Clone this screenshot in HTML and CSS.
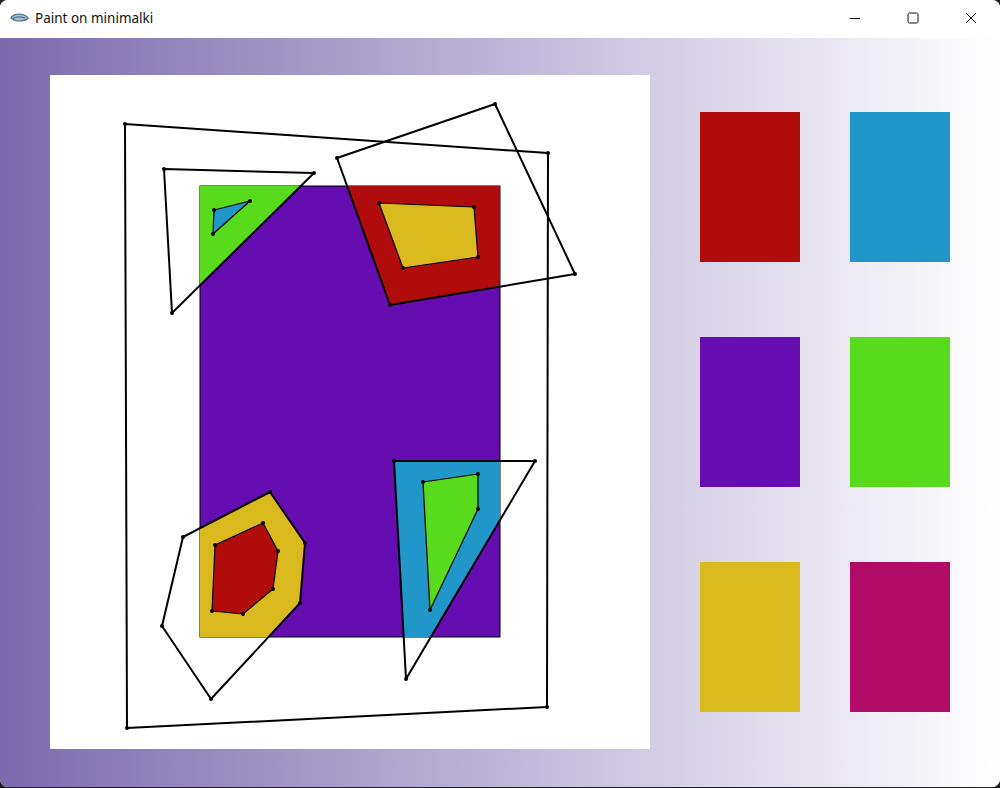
FILE: index.html
```html
<!DOCTYPE html>
<html>
<head>
<meta charset="utf-8">
<title>Paint on minimalki</title>
<link rel="stylesheet" href="styles.css">
</head>
<body>
<div class="window">
  <div class="titlebar">
    <div class="title">
      <svg class="app-icon" width="19" height="12" viewBox="0 0 19 12">
        <path d="M1 6 C3 2 9 1 14 3 C16 4 18 5 18 6.5 C16 8 12 9 8 9 C5 9 3 8 1 6 Z" fill="#a9c3d2" stroke="#3f6b86" stroke-width="1.2"/>
        <path d="M3 6.5 C6 4.5 10 4.5 15 6" fill="none" stroke="#2f5a74" stroke-width="1"/>
      </svg>
      <span class="title-text">Paint on minimalki</span>
    </div>
    <div class="controls">
      <div class="ctrl">
        <svg width="12" height="12" viewBox="0 0 12 12"><path d="M1 6.5 H11" stroke="#111" stroke-width="1"/></svg>
      </div>
      <div class="ctrl">
        <svg width="12" height="12" viewBox="0 0 12 12"><rect x="1" y="1" width="10" height="10" rx="1.5" fill="none" stroke="#111" stroke-width="1"/></svg>
      </div>
      <div class="ctrl">
        <svg width="12" height="12" viewBox="0 0 12 12"><path d="M1 1 L11 11 M11 1 L1 11" stroke="#111" stroke-width="1"/></svg>
      </div>
    </div>
  </div>
  <div class="client">
    <div class="canvas">
      <svg width="600" height="674" viewBox="50 75 600 674">
        <defs>
          <clipPath id="rect">
            <rect x="200" y="186" width="300" height="451"/>
          </clipPath>
        </defs>
        <rect x="200" y="186" width="300" height="451" fill="#650db0" stroke="#000" stroke-width="1"/>
        <g clip-path="url(#rect)">
          <polygon points="164,169 314,173 172,313" fill="#58da1d"/>
          <polygon points="337,158 495,104 575,274 390,305" fill="#b00c0c"/>
          <polygon points="183,537 270,492 305,543 300,603 211,699 162,626" fill="#dab91f"/>
          <polygon points="394,461 535,461 406,679" fill="#2196c8"/>
        </g>
        <polygon points="214,210 250,201 213,234" fill="#2196c8"/>
        <polygon points="379,203 474,207 478,257 403,268" fill="#dab91f"/>
        <polygon points="215,545 263,523 278,551 273,589 243,614 212,611" fill="#b00c0c"/>
        <polygon points="423,482 478,474 478,509 430,610" fill="#58da1d"/>
        <g fill="none" stroke="#000" stroke-width="1.2" stroke-linejoin="round">
          <polygon points="214,210 250,201 213,234"/>
          <polygon points="379,203 474,207 478,257 403,268"/>
          <polygon points="215,545 263,523 278,551 273,589 243,614 212,611"/>
          <polygon points="423,482 478,474 478,509 430,610"/>
        </g>
        <g fill="none" stroke="#000" stroke-width="2" stroke-linejoin="round">
          <polygon points="125,124 548,153 547,707 127,728"/>
          <polygon points="164,169 314,173 172,313"/>
          <polygon points="337,158 495,104 575,274 390,305"/>
          <polygon points="183,537 270,492 305,543 300,603 211,699 162,626"/>
          <polygon points="394,461 535,461 406,679"/>
        </g>
        <g fill="#000">
          <circle cx="125" cy="124" r="2"/><circle cx="548" cy="153" r="2"/><circle cx="547" cy="707" r="2"/><circle cx="127" cy="728" r="2"/>
          <circle cx="164" cy="169" r="2"/><circle cx="314" cy="173" r="2"/><circle cx="172" cy="313" r="2"/>
          <circle cx="214" cy="210" r="2"/><circle cx="250" cy="201" r="2"/><circle cx="213" cy="234" r="2"/>
          <circle cx="337" cy="158" r="2"/><circle cx="495" cy="104" r="2"/><circle cx="575" cy="274" r="2"/><circle cx="390" cy="305" r="2"/>
          <circle cx="379" cy="203" r="2"/><circle cx="474" cy="207" r="2"/><circle cx="478" cy="257" r="2"/><circle cx="403" cy="268" r="2"/>
          <circle cx="183" cy="537" r="2"/><circle cx="270" cy="492" r="2"/><circle cx="305" cy="543" r="2"/><circle cx="300" cy="603" r="2"/><circle cx="211" cy="699" r="2"/><circle cx="162" cy="626" r="2"/>
          <circle cx="215" cy="545" r="2"/><circle cx="263" cy="523" r="2"/><circle cx="278" cy="551" r="2"/><circle cx="273" cy="589" r="2"/><circle cx="243" cy="614" r="2"/><circle cx="212" cy="611" r="2"/>
          <circle cx="394" cy="461" r="2"/><circle cx="535" cy="461" r="2"/><circle cx="406" cy="679" r="2"/>
          <circle cx="423" cy="482" r="2"/><circle cx="478" cy="474" r="2"/><circle cx="478" cy="509" r="2"/><circle cx="430" cy="610" r="2"/>
        </g>
      </svg>
    </div>
    <div class="palette">
      <div class="swatch red"></div>
      <div class="swatch blue"></div>
      <div class="swatch purple"></div>
      <div class="swatch green"></div>
      <div class="swatch yellow"></div>
      <div class="swatch magenta"></div>
    </div>
  </div>
</div>
</body>
</html>
```

FILE: styles.css
```css
html, body {
  margin: 0;
  padding: 0;
  width: 1000px;
  height: 788px;
  overflow: hidden;
  background: #1f1f1f;
}

.window {
  width: 1000px;
  height: 787px;
  border-radius: 8px;
  overflow: hidden;
  display: flex;
  flex-direction: column;
  background: #ffffff;
}

.titlebar {
  height: 38px;
  flex: none;
  display: flex;
  justify-content: space-between;
  align-items: center;
  background: #ffffff;
  font-family: "Noto Sans", "Open Sans", sans-serif;
  font-size: 13.5px;
  color: #111;
}

.title {
  display: flex;
  align-items: center;
  padding-left: 10px;
  gap: 6px;
  margin-top: -3px;
}

.app-icon {
  display: block;
}

.controls {
  display: flex;
  height: 100%;
}

.ctrl {
  width: 58px;
  height: 100%;
  display: flex;
  align-items: center;
  justify-content: center;
}

.ctrl svg {
  display: block;
  margin-top: -3px;
}

.client {
  flex: 1;
  display: flex;
  align-items: flex-start;
  padding: 37px 0 0 50px;
  background: linear-gradient(to right, #7b6aae 0%, #d2cce3 65%, #ffffff 100%);
}

.canvas {
  width: 600px;
  height: 674px;
  background: #ffffff;
  flex: none;
}

.canvas svg {
  display: block;
}

.palette {
  margin: 37px 0 0 50px;
  display: grid;
  grid-template-columns: 100px 100px;
  grid-auto-rows: 150px;
  column-gap: 50px;
  row-gap: 75px;
}

.red { background: #b00c0c; }
.blue { background: #2196c8; }
.purple { background: #650db0; }
.green { background: #58da1d; }
.yellow { background: #dab91f; }
.magenta { background: #b00c66; }
```
